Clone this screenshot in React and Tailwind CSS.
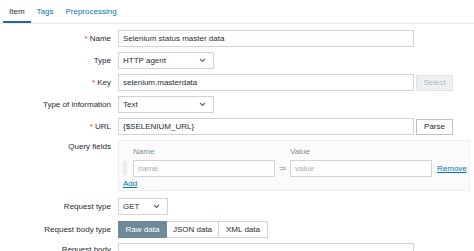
import React from 'react'

const Chevron = () => (
  <svg width="7" height="5" viewBox="0 0 7 5" className="shrink-0">
    <polyline points="1,1 3.5,3.5 6,1" fill="none" stroke="#5d6a72" strokeWidth="1.1" />
  </svg>
)

const Label = ({ req, children, top }) => (
  <div className={`w-[111px] shrink-0 text-right ${top ? 'self-start pt-[3px]' : ''}`}>
    {req && <span className="text-[#e33734] mr-[2px]">*</span>}
    {children}
  </div>
)

const Input = ({ value, w = 'w-[296px]' }) => (
  <div className={`${w} h-[17px] border border-[#cdd5d9] bg-white px-[4px] flex items-center`}>
    {value}
  </div>
)

const Select = ({ value, w }) => (
  <div className={`${w} h-[17px] border border-[#cdd5d9] bg-white pl-[4px] pr-[7px] flex items-center justify-between`}>
    <span>{value}</span>
    <Chevron />
  </div>
)

const Row = ({ children, extra = '' }) => (
  <div className={`flex items-center gap-[7px] ${extra}`}>{children}</div>
)

export default function App() {
  return (
    <div className="w-[474px] h-[251px] overflow-hidden bg-white text-[8px] leading-none text-[#1f2c33] font-['Liberation_Sans',Arial,sans-serif]">
      {/* Tabs */}
      <div className="flex h-[24px] border-b border-[#e8ecee] pl-[3px]">
        <div className="px-[6px] flex items-center border-b-2 border-[#1f6aa5] pt-[2px]">Item</div>
        <div className="px-[6px] flex items-center text-[#0275b8]">Tags</div>
        <div className="px-[6px] flex items-center text-[#0275b8]">Preprocessing</div>
      </div>

      {/* Form */}
      <div className="flex flex-col gap-[5px] pt-[6px]">
        <Row>
          <Label req>Name</Label>
          <Input value="Selenium status master data" />
        </Row>
        <Row>
          <Label>Type</Label>
          <Select value="HTTP agent" w="w-[96px]" />
        </Row>
        <Row>
          <Label req>Key</Label>
          <div className="flex items-center gap-[2px]">
            <Input value="selenium.masterdata" />
            <div className="w-[37px] h-[16px] border border-[#dfe4e7] bg-[#eef1f3] text-[#b1bbc0] flex items-center justify-center">
              Select
            </div>
          </div>
        </Row>
        <Row>
          <Label>Type of information</Label>
          <Select value="Text" w="w-[96px]" />
        </Row>
        <Row>
          <Label req>URL</Label>
          <div className="flex items-center gap-[2px]">
            <Input value="{$SELENIUM_URL}" />
            <div className="w-[37px] h-[16px] border border-[#b9c4c9] bg-white flex items-center justify-center">
              Parse
            </div>
          </div>
        </Row>
        <Row>
          <Label top>Query fields</Label>
          <div className="w-[352px] h-[51px] border border-[#edf0f2] bg-[#fbfbfb] pt-[4px] pl-[3px]">
            <div className="flex text-[#768d99] h-[14px] items-center">
              <div className="w-[11px]" />
              <div className="w-[157px]">Name</div>
              <div>Value</div>
            </div>
            <div className="flex items-center mt-[1px]">
              <div className="w-[11px] h-[17px] flex justify-start pl-[1px]">
                <div className="w-[4px] h-[14px] mt-[1px] bg-[radial-gradient(circle,#d3dadd_0.6px,transparent_0.8px)] bg-[length:2px_2px]" />
              </div>
              <div className="w-[142px] h-[17px] border border-[#cdd5d9] bg-white px-[4px] flex items-center text-[#a3aeb3]">name</div>
              <div className="w-[15px] flex justify-center text-[#768d99]">⇒</div>
              <div className="w-[142px] h-[17px] border border-[#cdd5d9] bg-white px-[4px] flex items-center text-[#a3aeb3]">value</div>
              <div className="ml-[5px] text-[#0275b8] underline">Remove</div>
            </div>
            <div className="mt-[3px] pl-[1px] text-[#0275b8] underline">Add</div>
          </div>
        </Row>
        <Row extra="mt-[2px]">
          <Label>Request type</Label>
          <Select value="GET" w="w-[50px]" />
        </Row>
        <Row extra="mt-[1px]">
          <Label>Request body type</Label>
          <div className="flex h-[17px]">
            <div className="w-[49px] bg-[#6e8a98] text-white flex items-center justify-center">Raw data</div>
            <div className="w-[51px] border-y border-[#cdd5d9] bg-white flex items-center justify-center">JSON data</div>
            <div className="w-[50px] border border-[#cdd5d9] bg-white flex items-center justify-center">XML data</div>
          </div>
        </Row>
        <Row>
          <Label top>Request body</Label>
          <div className="w-[296px] h-[40px] border border-[#cdd5d9] bg-white" />
        </Row>
      </div>
    </div>
  )
}
